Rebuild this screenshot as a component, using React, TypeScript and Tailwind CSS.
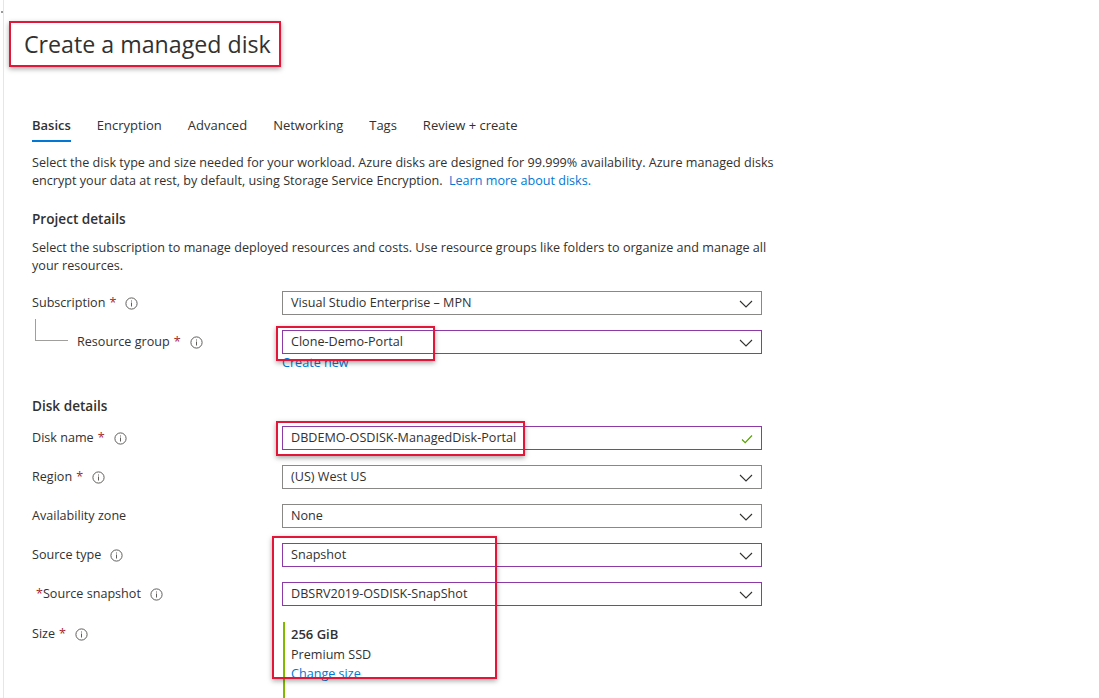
import React from "react";

const font = { fontFamily: '"Open Sans", "Noto Sans", sans-serif' };

function InfoIcon() {
  return (
    <svg width="13" height="13" viewBox="0 0 13 13" className="shrink-0">
      <circle cx="6.5" cy="6.5" r="5.6" fill="none" stroke="#605e5c" strokeWidth="1" />
      <rect x="6" y="5.5" width="1" height="4" fill="#605e5c" />
      <rect x="6" y="3.5" width="1" height="1" fill="#605e5c" />
    </svg>
  );
}

function Chevron() {
  return (
    <svg width="14" height="8" viewBox="0 0 14 8" className="shrink-0">
      <path d="M1 1 L7 7 L13 1" fill="none" stroke="#323130" strokeWidth="1.1" />
    </svg>
  );
}

function Check() {
  return (
    <svg width="12" height="10" viewBox="0 0 12 10" className="shrink-0">
      <path d="M1 5.5 L4.2 8.6 L11 1.5" fill="none" stroke="#57a300" strokeWidth="1.2" />
    </svg>
  );
}

function Star() {
  return <span className="text-[#a4262c] ml-[4px]">*</span>;
}

function Info() {
  return (
    <span className="ml-[9px] flex">
      <InfoIcon />
    </span>
  );
}

function Field({
  value,
  purple,
  check,
}: {
  value: string;
  purple?: boolean;
  check?: boolean;
}) {
  return (
    <div
      className={`w-[480px] h-[24px] flex items-center justify-between pl-[8px] pr-[8px] pt-[1px] border bg-white text-[12.6px] text-[#323130] ${
        purple ? "border-[#8d3aa6]" : "border-[#8a8886]"
      }`}
    >
      <span className="whitespace-nowrap">{value}</span>
      {check ? <Check /> : <Chevron />}
    </div>
  );
}

function Label({ children }: { children: React.ReactNode }) {
  return (
    <div className="w-[250px] h-[24px] pt-[1px] self-start flex items-center text-[12.6px] text-[#323130] whitespace-nowrap">
      {children}
    </div>
  );
}

const redBox = "absolute border-2 border-[#e3163a] shadow-[0_2px_5px_rgba(0,0,0,0.35)] pointer-events-none";

export default function App() {
  return (
    <div className="min-h-[698px] bg-white pl-[3px] relative" style={font}>
      <div className="absolute left-[1px] top-[11px] w-[2px] h-[2px] bg-[#9a9a9a]" />
      <div className="border-l border-[#e6e6e6] min-h-[698px] pt-[21px]">
        {/* title */}
        <div className="pl-[5px]">
          <div className="inline-flex items-center h-[46px] pl-[13px] pr-[8px] pt-[1px] border-2 border-[#e3163a] shadow-[0_2px_5px_rgba(0,0,0,0.35)]">
            <h1 className="text-[23.2px] text-[#323130] leading-none">Create a managed disk</h1>
          </div>
        </div>

        <div className="pl-[28px] text-[#323130]">
          {/* tabs */}
          <div className="flex gap-[26px] mt-[49px] text-[13px] leading-[18px]">
            <div className="flex flex-col">
              <span className="font-semibold">Basics</span>
              <span className="h-[2px] bg-[#0078d4] mt-[6px]" />
            </div>
            <span>Encryption</span>
            <span>Advanced</span>
            <span>Networking</span>
            <span>Tags</span>
            <span>Review + create</span>
          </div>

          <p className="mt-[12px] text-[12.6px] leading-[18px] whitespace-nowrap">
            Select the disk type and size needed for your workload. Azure disks are designed for 99.999% availability. Azure managed disks
            <br />
            encrypt your data at rest, by default, using Storage Service Encryption.{" "}
            <span className="text-[#0078d4] ml-[3px]">Learn more about disks.</span>
          </p>

          <h2 className="mt-[20px] text-[13.6px] leading-[18px] font-semibold">Project details</h2>
          <p className="mt-[11px] text-[12.6px] leading-[18px] whitespace-nowrap">
            Select the subscription to manage deployed resources and costs. Use resource groups like folders to organize and manage all
            <br />
            your resources.
          </p>

          {/* subscription */}
          <div className="flex mt-[16px]">
            <Label>
              Subscription
              <Star />
              <Info />
            </Label>
            <Field value="Visual Studio Enterprise – MPN" />
          </div>

          <div className="flex mt-[15px]">
            <Label>
              <div className="relative pl-[45px] flex items-center">
                <div className="absolute left-[3px] top-[-14px] w-[33px] h-[22px] border-l border-b border-[#a19f9d]" />
                Resource group
                <Star />
                <Info />
              </div>
            </Label>
            <div className="relative">
              <Field value="Clone-Demo-Portal" purple />
              <div className={`${redBox} left-[-6px] top-[-4px] w-[159px] h-[35px]`} />
              <div className="text-[12.6px] leading-[18px] text-[#0078d4]">Create new</div>
            </div>
          </div>

          <h2 className="mt-[25px] text-[13.6px] leading-[18px] font-semibold">Disk details</h2>

          <div className="flex mt-[11px]">
            <Label>
              Disk name
              <Star />
              <Info />
            </Label>
            <div className="relative">
              <Field value="DBDEMO-OSDISK-ManagedDisk-Portal" purple check />
              <div className={`${redBox} left-[-6px] top-[-5px] w-[249px] h-[35px]`} />
            </div>
          </div>

          <div className="flex mt-[15px]">
            <Label>
              Region
              <Star />
              <Info />
            </Label>
            <Field value="(US) West US" />
          </div>

          <div className="flex mt-[15px]">
            <Label>Availability zone</Label>
            <Field value="None" />
          </div>

          <div className="flex mt-[15px]">
            <div className="flex flex-col">
              <Label>
                Source type
                <Info />
              </Label>
              <div className="mt-[15px]">
                <Label>
                  <span className="ml-[4px] text-[#a4262c]">*</span>
                  Source snapshot
                  <Info />
                </Label>
              </div>
              <div className="mt-[16px]">
                <Label>
                  Size
                  <Star />
                  <Info />
                </Label>
              </div>
            </div>
            <div className="relative">
              <Field value="Snapshot" purple />
              <div className="mt-[15px]">
                <Field value="DBSRV2019-OSDISK-SnapShot" purple />
              </div>
              <div className="mt-[16px] ml-[1px] border-l-2 border-[#7fba00] pl-[6px] pt-[3px] pb-[14px] text-[12.6px] leading-[19.5px]">
                <div className="font-semibold text-[13px]">256 GiB</div>
                <div>Premium SSD</div>
                <div className="text-[#0078d4]">Change size</div>
              </div>
              <div className={`${redBox} left-[-10px] top-[-7px] w-[225px] h-[143px]`} />
            </div>
          </div>
        </div>
      </div>
    </div>
  );
}
